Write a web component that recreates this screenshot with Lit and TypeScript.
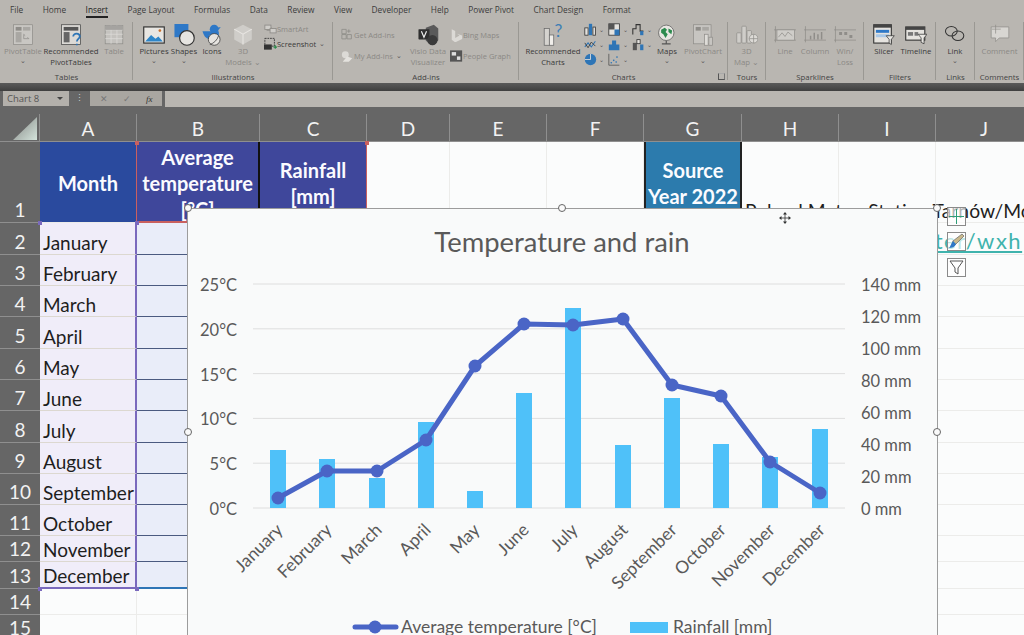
import { LitElement, html, css, svg, nothing } from "lit";
import { customElement } from "lit/decorators.js";

const G = "#8f8d89"; // disabled grey
const B = "#2e75b6";
const I: Record<string, any> = {
  pivot: svg`<rect x="2" y="1" width="26" height="27" fill="#c9c7c3" stroke="${G}"/><rect x="5" y="4" width="8" height="5" fill="${G}"/><rect x="15" y="4" width="10" height="5" fill="#a9a7a3"/><rect x="5" y="11" width="8" height="14" fill="#a9a7a3"/><path d="M16 20h7M23 20l-2-2M16 20v-6l2 2" fill="none" stroke="${G}"/>`,
  rec: svg`<rect x="2" y="1" width="26" height="27" fill="#dcdad6" stroke="#444"/><rect x="5" y="4" width="20" height="5" fill="#555"/><rect x="5" y="11" width="8" height="14" fill="#666"/><path d="M18 17c0-5 9-5 9 0 0 3-4 3-4 7M23 27v2" fill="none" stroke="${B}" stroke-width="2.4"/>`,
  table: svg`<rect x="3" y="2" width="24" height="25" fill="#c4c2be" stroke="${G}"/><path d="M3 8h24M3 14h24M3 20h24M11 2v25M19 2v25" stroke="#dedcd8"/><rect x="3" y="2" width="24" height="6" fill="#a5a3a0"/>`,
  pictures: svg`<rect x="1" y="4" width="28" height="22" fill="#e8e6e2" stroke="#333" stroke-width="1.6"/><path d="M3 24l8-9 6 5 4-3 6 7z" fill="#2e86c9"/><circle cx="23" cy="9" r="1.8" fill="#c9702c"/>`,
  shapes: svg`<rect x="2" y="0" width="19" height="18" fill="#2e78c7"/><circle cx="19" cy="19" r="10" fill="#e6e4e0" stroke="#333" stroke-width="1.6"/>`,
  icons: svg`<circle cx="18" cy="7" r="6" fill="#2e78c7"/><path d="M2 10c2 6 4 10 10 11h8c4-2 5-6 4-11H12z" fill="#2e78c7"/><path d="M22 5l5-1-3 4z" fill="#2e78c7"/><circle cx="18" cy="21" r="8" fill="#e6e4e0" stroke="#333"/><path d="M12 28c6-2 10-6 12-12" stroke="#333" fill="none"/>`,
  cube: svg`<path d="M15 1l12 6v14l-12 7-12-7V7z" fill="#cfcdc9"/><path d="M3 7l12 7 12-7M15 14v14" stroke="#e8e6e2" fill="none" stroke-width="1.4"/>`,
  smart: svg`<rect x="1" y="3" width="7" height="5" fill="#cfcdc9" stroke="${G}"/><path d="M8 6l5 3H3" fill="none" stroke="${G}"/><rect x="7" y="7" width="7" height="5" fill="#cfcdc9" stroke="${G}"/>`,
  shot: svg`<rect x="1" y="1" width="11" height="9" fill="none" stroke="#333" stroke-dasharray="2 1"/><rect x="0" y="8" width="9" height="6" fill="#333"/><path d="M11 11h4M13 9v4" stroke="#2a8a4a" stroke-width="1.4"/>`,
  addin: svg`<path d="M1 1h5v5H1zM7 7h5v5H7zM1 7h5v5H1z" fill="none" stroke="${G}"/><path d="M9 1v4M7 3h4" stroke="${G}"/>`,
  myadd: svg`<circle cx="5" cy="6" r="4" fill="#dcdad6"/><path d="M7 8l6 2-4 4H2z" fill="#e4e2de"/>`,
  visio: svg`<path d="M12 5l11-4 6 5v16l-8 7-9-6z" fill="#5a5a5a"/><rect x="2" y="7" width="15" height="14" rx="1" fill="#2f2f2f"/><path d="M6 10l3.5 8 3.5-8" stroke="#eee" stroke-width="1.6" fill="none"/><circle cx="21" cy="22" r="7" fill="#3a3a3a"/>`,
  bing: svg`<path d="M2 1l4 2v8l5-3-3-2 6 2v4l-8 4-4-3z" fill="#dcdad6"/>`,
  people: svg`<rect x="0" y="1" width="14" height="13" fill="#555"/><rect x="2" y="3" width="5" height="4" fill="#ddd"/><rect x="8" y="8" width="4" height="4" fill="#ddd"/>`,
  recChart: svg`<rect x="3" y="6" width="7" height="23" fill="#d5d3cf" stroke="#666"/><rect x="10" y="15" width="6" height="14" fill="#f0eeea" stroke="#666"/><text x="17" y="18" font-size="24" fill="#3f7fb5" font-family="Lato, sans-serif">?</text>`,
  maps: svg`<circle cx="14" cy="12" r="10.5" fill="#e8e6e2" stroke="#555"/><path d="M7 8l5-3 3 3-2 3 3 3-3 5-3-5-3-2zM17 6l5 3-1 5-4-3z" fill="#2c8a4e"/><path d="M8 27h12M14 23v4" stroke="#555" stroke-width="1.6"/>`,
  pivotChart: svg`<rect x="2" y="1" width="24" height="26" fill="#c7c5c1" stroke="${G}"/><rect x="5" y="4" width="7" height="5" fill="${G}"/><rect x="14" y="4" width="9" height="5" fill="#a9a7a3"/><rect x="17" y="14" width="5" height="15" fill="#dedcd8" stroke="${G}"/><rect x="23" y="18" width="5" height="11" fill="#c7c5c1" stroke="${G}"/>`,
  map3d: svg`<rect x="1" y="12" width="6" height="14" rx="1" fill="#cfcdc9" stroke="${G}"/><rect x="8" y="3" width="6" height="23" rx="1" fill="#cfcdc9" stroke="${G}"/><rect x="15" y="9" width="6" height="17" rx="1" fill="#cfcdc9" stroke="${G}"/><circle cx="24" cy="20" r="6" fill="#dcdad6" stroke="${G}"/><path d="M18 20h12M24 14v12" stroke="${G}"/>`,
  line: svg`<path d="M2 3v22M0 8h30M0 22h30" stroke="${G}"/><rect x="4" y="8" width="24" height="14" fill="#cfcdc9" stroke="${G}"/><path d="M6 18l5-6 4 5 4-6 6 5" fill="none" stroke="${G}"/>`,
  column: svg`<path d="M2 3v22M0 8h30M0 22h30" stroke="${G}"/><path d="M8 21v-5h2v5zM13 21v-9h2v9zM18 21v-7h2v7zM23 21v-10h2v10z" fill="${G}"/>`,
  win: svg`<path d="M2 3v22M0 8h30M0 22h30" stroke="${G}"/><path d="M7 11h4v4H7zM14 11h4v4h-4zM21 15h4v4h-4z" fill="${G}"/>`,
  slicer: svg`<rect x="1" y="1" width="24" height="25" fill="#e5e3df" stroke="#333" stroke-width="1.5"/><rect x="1" y="1" width="24" height="4" fill="#444"/><rect x="4" y="8" width="18" height="4" fill="#2e78c7"/><rect x="4" y="14" width="18" height="4" fill="#a8c8e8"/><path d="M18 16h11l-4 5v7l-3-2v-5z" fill="#e8e6e2" stroke="#333"/>`,
  timeline: svg`<rect x="1" y="4" width="26" height="18" fill="#e5e3df" stroke="#333" stroke-width="1.5"/><rect x="1" y="4" width="26" height="4" fill="#444"/><rect x="4" y="11" width="7" height="5" fill="#777"/><rect x="13" y="11" width="5" height="5" fill="#777"/><path d="M18 14h12l-4 5v8l-4-2v-6z" fill="#e8e6e2" stroke="#333"/>`,
  link: svg`<ellipse cx="10" cy="10" rx="8" ry="6.5" fill="none" stroke="#333" stroke-width="1.4"/><ellipse cx="19" cy="16" rx="8" ry="6.5" fill="none" stroke="#333" stroke-width="1.4"/>`,
  comment: svg`<path d="M3 4h24v15H14l-5 5v-5H3z" fill="#d8d6d2" stroke="${G}"/><path d="M9 1v12M4 7h12" stroke="${G}"/>`,
};

type Big = { k: "big"; w: number; icon: string; l: string[]; d?: boolean; chev?: boolean };
type Small = { icon?: string; l: string; d?: boolean; chev?: boolean };
type Col = { k: "col"; w: number; tight?: boolean; rows: Small[] };
type Gal = { k: "gal"; w: number };
type Item = Big | Col | Gal;
const big = (w: number, icon: string, l: string[], d = false, chev = false): Big => ({ k: "big", w, icon, l, d, chev });

const groups: { t: string; w: number; pad: number; launcher?: boolean; items: Item[] }[] = [
  { t: "Tables", w: 133, pad: 0, items: [big(46, "pivot", ["PivotTable"], true, true), big(50, "rec", ["Recommended", "PivotTables"]), big(36, "table", ["Table"], true)] },
  { t: "Illustrations", w: 200, pad: 6, items: [big(30, "pictures", ["Pictures"], false, true), big(30, "shapes", ["Shapes"], false, true), big(26, "icons", ["Icons"]), big(36, "cube", ["3D", "Models ⌄"], true),
    { k: "col", w: 70, tight: true, rows: [{ icon: "smart", l: "SmartArt", d: true }, { icon: "shot", l: "Screenshot", chev: true }] }] },
  { t: "Add-ins", w: 186, pad: 5, items: [{ k: "col", w: 71, rows: [{ icon: "addin", l: "Get Add-ins", d: true }, { icon: "myadd", l: "My Add-ins", d: true, chev: true }] }, big(38, "visio", ["Visio Data", "Visualizer"], true),
    { k: "col", w: 70, rows: [{ icon: "bing", l: "Bing Maps", d: true }, { icon: "people", l: "People Graph", d: true }] }] },
  { t: "Charts", w: 209, pad: 6, launcher: true, items: [big(56, "recChart", ["Recommended", "Charts"]), { k: "gal", w: 71 }, big(30, "maps", ["Maps"], false, true), big(42, "pivotChart", ["PivotChart"], true, true)] },
  { t: "Tours", w: 38, pad: 0, items: [big(37, "map3d", ["3D", "Map ⌄"], true)] },
  { t: "Sparklines", w: 98, pad: 4, items: [big(30, "line", ["Line"], true), big(30, "column", ["Column"], true), big(30, "win", ["Win/", "Loss"], true)] },
  { t: "Filters", w: 72, pad: 4, items: [big(32, "slicer", ["Slicer"]), big(32, "timeline", ["Timeline"])] },
  { t: "Links", w: 39, pad: 0, items: [big(38, "link", ["Link"], false, true)] },
  { t: "Comments", w: 49, pad: 0, items: [big(49, "comment", ["Comment"], true)] },
];

const tabs = ["File", "Home", "Insert", "Page Layout", "Formulas", "Data", "Review", "View", "Developer", "Help", "Power Pivot", "Chart Design", "Format"];

const gallery = [
  svg`<rect x="1" y="6" width="4" height="9" fill="#e5e3df" stroke="#333"/><rect x="6" y="1" width="4" height="14" fill="${B}"/><rect x="11" y="5" width="3" height="10" fill="#e5e3df" stroke="#333"/>`,
  svg`<rect x="1" y="1" width="13" height="14" fill="#e5e3df" stroke="#333"/><rect x="8" y="8" width="6" height="7" fill="${B}"/><rect x="1" y="1" width="7" height="7" fill="#555"/>`,
  svg`<path d="M1 14V7h4V2h5v8h4" fill="none" stroke="#333" stroke-width="1.3"/><path d="M10 15v-5h4v5z" fill="${B}"/>`,
  svg`<path d="M1 11l4-5 4 5 5-7" fill="none" stroke="${B}" stroke-width="1.3"/><path d="M1 6l4 6 4-7 5 5" fill="none" stroke="#333"/>`,
  svg`<path d="M1 15V8h4V3h5v5h4v7z" fill="${B}"/>`,
  svg`<rect x="1" y="6" width="5" height="9" fill="#555"/><rect x="6" y="2" width="4" height="5" fill="#e5e3df" stroke="#333"/><rect x="10" y="8" width="4" height="7" fill="${B}"/>`,
  svg`<circle cx="8" cy="8" r="7" fill="${B}"/><path d="M8 8V1M8 8H1" stroke="#e5e3df"/>`,
  svg`<path d="M1 1v14h13" fill="none" stroke="#555"/><path d="M4 12h.1M7 9h.1M10 11h.1M11 5h.1" stroke="${B}" stroke-width="2" stroke-linecap="round"/>`,
];

const colW = [40, 97, 123, 107, 83, 97, 97, 98, 97, 97, 97];
const rowH = [28, 81, 32, 31, 31, 32, 31, 31, 32, 31, 31, 31, 26, 27, 26, 26];
const colN = ["", "A", "B", "C", "D", "E", "F", "G", "H", "I", "J"];
const months = ["January", "February", "March", "April", "May", "June", "July", "August", "September", "October", "November", "December"];

const bars = [450, 459, 478, 422, 491, 393, 308, 445, 398, 444, 457, 429];
const lineY = [498, 471, 471, 440, 366, 324, 325, 319, 385, 396, 462, 493];
const xs = [278, 327, 377, 426, 475, 524, 573, 623, 672, 721, 770, 820];

// selection corner grips, in sheet coordinates
const grips: [number, number, string][] = [
  [135, 27, "#c9605f"], [365, 27, "#c9605f"],
  [38, 107, "#7a69bd"], [135, 107, "#7a69bd"], [38, 473, "#7a69bd"], [135, 473, "#7a69bd"],
];

@customElement("excel-ribbon")
class ExcelRibbon extends LitElement {
  static styles = css`
    :host { display: block; background: #b9b6b1; font-family: "Open Sans", sans-serif; color: #333; }
    .tabs { display: flex; gap: 19.5px; height: 22px; padding: 3px 0 0 10px; box-sizing: border-box; font-size: 8.3px; line-height: 14px; }
    .tab { position: relative; color: #3c3c3c; white-space: nowrap; }
    .tab.on { color: #222; }
    .tab.on::after { content: ""; position: absolute; left: 0; right: 0; top: 13px; height: 1.5px; background: #222; }
    .body { display: flex; height: 61px; }
    .group { box-sizing: border-box; display: flex; flex-direction: column; height: 61px; position: relative; flex: none; }
    .group::after { content: ""; position: absolute; right: 0; top: 0; width: 1px; height: 58px; background: #9a9893; }
    .items { display: flex; flex: 1; min-height: 0; }
    .gt { text-align: center; font-size: 7.8px; line-height: 12px; height: 12px; color: #444; white-space: nowrap; }
    .launch { position: absolute; right: 3px; bottom: 3px; width: 5px; height: 5px; border: 1px solid #555; border-top-color: #aaa; border-right-color: #777; }
    .big { display: flex; flex-direction: column; align-items: center; flex: none; font-size: 7.8px; line-height: 10.5px; white-space: nowrap; }
    .big svg { width: 22px; height: 22px; display: block; margin-top: 2px; }
    .big .lb { text-align: center; color: #3a3a3a; }
    .d, .big .lb.d { color: #8b8985; }
    .chev { font-size: 7px; line-height: 8px; color: #555; }
    .col { display: flex; flex-direction: column; flex: none; gap: 7px; padding: 6px 0 0 3px; box-sizing: border-box; font-size: 7.5px; line-height: 14px; white-space: nowrap; }
    .col.tight { padding-top: 0; gap: 1px; }
    .sm { display: flex; align-items: center; color: #3a3a3a; }
    .sm.d { color: #8b8985; }
    .sm svg { width: 13px; height: 14px; flex: none; }
    .sm .chev { margin-left: 3px; }
    .gal { display: grid; grid-template-columns: repeat(3, 24px); grid-auto-rows: 15px; flex: none; padding-left: 3px; box-sizing: border-box; }
    .gi { display: flex; align-items: center; gap: 2px; font-size: 6px; color: #555; }
    .gi svg { width: 13px; height: 13px; }
    .sep { height: 8px; background: linear-gradient(#5a5a5a, #3f3f3f); }
  `;
  renderItem(it: Item) {
    if (it.k === "big") {
      return html`<div class="big" style="width:${it.w}px">
        <svg viewBox="0 0 30 30">${I[it.icon]}</svg>
        <div class="lb ${it.d ? "d" : ""}">${it.l.map((t) => html`<div>${t}</div>`)}</div>
        ${it.chev ? html`<div class="chev">⌄</div>` : nothing}
      </div>`;
    }
    if (it.k === "col") {
      return html`<div class="col ${it.tight ? "tight" : ""}" style="width:${it.w}px">
        ${it.rows.map((r) => html`<div class="sm ${r.d ? "d" : ""}"><svg viewBox="0 0 15 15">${r.icon ? I[r.icon] : nothing}</svg><span>${r.l}</span>${r.chev ? html`<span class="chev">⌄</span>` : nothing}</div>`)}
      </div>`;
    }
    return html`<div class="gal" style="width:${it.w}px">
      ${gallery.map((g) => html`<div class="gi"><svg viewBox="0 0 16 16">${g}</svg>⌄</div>`)}
    </div>`;
  }
  render() {
    return html`
      <div class="tabs">${tabs.map((t) => html`<div class="tab ${t === "Insert" ? "on" : ""}">${t}</div>`)}</div>
      <div class="body">
        ${groups.map((g) => html`<div class="group" style="width:${g.w}px">
          <div class="items" style="padding-left:${g.pad}px">${g.items.map((i) => this.renderItem(i))}</div>
          <div class="gt">${g.t}</div>
          ${g.launcher ? html`<div class="launch"></div>` : nothing}
        </div>`)}
      </div>
      <div class="sep"></div>`;
  }
}

@customElement("formula-bar")
class FormulaBar extends LitElement {
  static styles = css`
    :host { display: flex; align-items: flex-start; height: 23px; background: #666; font-family: "Open Sans", sans-serif; padding-left: 3px; box-sizing: border-box; }
    .name { width: 66px; height: 15px; background: #b3b0ab; display: flex; align-items: center; justify-content: space-between; padding: 0 6px 0 4px; box-sizing: border-box; font-size: 9.5px; color: #555; }
    .name i { width: 0; height: 0; border: 3px solid transparent; border-top: 3.5px solid #444; margin-top: 3px; }
    .dots { width: 21px; text-align: center; color: #ccc; font-size: 9px; line-height: 14px; }
    .btns { width: 72px; height: 15px; background: #a9a6a1; display: flex; align-items: center; justify-content: space-around; font-size: 9px; color: #777; font-family: "Liberation Serif", serif; padding: 0 2px; box-sizing: border-box; }
    .btns b { font-style: italic; color: #333; font-weight: normal; }
    .input { flex: 1; height: 16px; background: #b9b6b1; margin-left: 3px; }
  `;
  render() {
    return html`<div class="name">Chart 8<i></i></div><div class="dots">⋮</div>
      <div class="btns"><span>✕</span><span>✓</span><b>fx</b></div><div class="input"></div>`;
  }
}

@customElement("chart-overlay")
class ChartOverlay extends LitElement {
  static styles = css`
    :host { display: block; position: absolute; left: 187px; top: 94px; width: 750px; height: 440px; }
    svg.c { display: block; position: absolute; left: 0; top: 0; overflow: visible; }
    text { font-family: Lato, sans-serif; fill: #595959; }
    .t { font-size: 27.4px; text-anchor: middle; }
    .a { font-size: 16.5px; }
    .l { font-size: 17.5px; }
  `;
  render() {
    const left = [25, 20, 15, 10, 5, 0];
    const right = [140, 120, 100, 80, 60, 40, 20, 0];
    const pts = xs.map((x, i) => `${x},${lineY[i]}`).join(" ");
    return html`<svg class="c" width="750" height="440" viewBox="187 208 750 440">
      <rect x="187.5" y="208.5" width="750" height="440" fill="#f9fafa" stroke="#9c9c9c"/>
      <text class="t" x="562" y="251.5">Temperature and rain</text>
      ${left.map((_, i) => svg`<line x1="253" x2="845" y1="${284 + i * 44.8}" y2="${284 + i * 44.8}" stroke="#dedede"/>`)}
      ${left.map((v, i) => svg`<text class="a" x="237" y="${291 + i * 44.8}" text-anchor="end">${v}°C</text>`)}
      ${right.map((v, i) => svg`<text class="a" x="861" y="${291 + i * 32}">${v} mm</text>`)}
      ${bars.map((y, i) => svg`<rect x="${xs[i] - 8}" y="${y}" width="16" height="${508 - y}" fill="#4fc1f9"/>`)}
      <polyline points="${pts}" fill="none" stroke="#4a65c6" stroke-width="5" stroke-linejoin="round"/>
      ${xs.map((x, i) => svg`<circle cx="${x}" cy="${lineY[i]}" r="6.5" fill="#4a65c6"/>`)}
      ${months.map((m, i) => svg`<text class="l" text-anchor="end" transform="translate(${xs[i] + 6} 531) rotate(-45)">${m}</text>`)}
      <line x1="355" x2="396" y1="627" y2="627" stroke="#4a65c6" stroke-width="5" stroke-linecap="round"/>
      <circle cx="375" cy="627" r="6.5" fill="#4a65c6"/>
      <text class="l" x="401" y="633">Average temperature [°C]</text>
      <rect x="630" y="622" width="38" height="11" fill="#4fc1f9"/>
      <text class="l" x="673" y="633">Rainfall [mm]</text>
      ${[[188, 208], [562, 208], [937, 208], [188, 432], [937, 432]].map(([x, y]) => svg`<circle cx="${x}" cy="${y}" r="3.5" fill="#fafafa" stroke="#666"/>`)}
      <g stroke="#333" fill="#333" transform="translate(785 218)">
        <path d="M-5 0H5M0 -5V5" stroke-width=".8"/>
        <path d="M0 -6l-2 2.5h4zM0 6l-2-2.5h4zM-6 0l2.5-2v4zM6 0l-2.5-2v4z" stroke="none"/>
      </g>
      <g fill="#ffffffaa" stroke="#8a8a8a">
        <rect x="947.5" y="207.5" width="18" height="18"/>
        <rect x="947.5" y="232.5" width="18" height="18"/>
        <rect x="947.5" y="258.5" width="18" height="18"/>
      </g>
      <path d="M956.5 209v15M949 216.5h15" stroke="#2f9e78"/>
      <path d="M962 234l2 2-9 9-3-1 1-3z" fill="#c9b98c" stroke="#666" stroke-width=".7"/>
      <path d="M953 241l3 3c-1 3-4 4-7 4 1-1 2-4 4-7z" fill="#2e78c7"/>
      <path d="M950 261h13l-5 7v6l-3-2v-4z" fill="none" stroke="#555"/>
    </svg>`;
  }
}

@customElement("app-root")
export class AppRoot extends LitElement {
  static styles = css`
    :host { display: block; width: 1024px; height: 635px; overflow: hidden; background: #666; font-family: Lato, sans-serif; }
    .sheet { position: relative; display: grid; height: 521px; overflow: hidden; background: #fbfcfc; color: #1e1e1e; font-size: 19.3px; }
    .ch { background: #666; color: #f2f2f2; display: flex; justify-content: center; align-items: center; padding-top: 2px; font-size: 19px; border-right: 1px solid #8f8f8f; border-bottom: 1px solid #8f8f8f; box-sizing: border-box; position: relative; }
    .rh { background: #666; color: #f2f2f2; display: flex; justify-content: center; align-items: flex-end; font-size: 19px; line-height: 24px; border-bottom: 1px solid #8f8f8f; box-sizing: border-box; }
    .corner { border-right: 1px solid #8f8f8f; }
    .tri { position: absolute; left: 13px; top: 3px; width: 24px; height: 23px; background: linear-gradient(135deg, #9aa09c 30%, #d4e4dc); clip-path: polygon(100% 0, 100% 100%, 0 100%); }
    .cell { box-sizing: border-box; border-right: 1px solid #ececea; border-bottom: 1px solid #ececea; white-space: nowrap; display: flex; align-items: flex-end; line-height: 22px; padding: 0 3px; min-width: 0; }
    .hd { background: #3f479b; color: #fbfbff; font-size: 20px; font-weight: 700; text-align: center; justify-content: center; align-items: center; line-height: 26px; overflow: hidden; white-space: normal; padding: 2px 0 0; }
    .hd.a { background: #2a4a9e; border-right: 1px solid #c9605f; }
    .hd.b { border-right: 2px solid #111; border-bottom: 2px solid #c9605f; }
    .hd.c { border-right: 1px solid #c9605f; }
    .hd.g { background: #2c7bad; border-left: 2px solid #222; border-right: 2px solid #222; }
    .ma { background: #f0edf9; border-right: 2px solid #7a69bd; border-bottom: 1px solid #dcd8d0; font-size: 19px; }
    .ma.last { border-bottom: 2px solid #7a69bd; }
    .mb { background: #e9edf9; border-bottom: 1px solid #4a5a80; border-right: 0; }
    .mb.last { border-bottom: 2px solid #2e75b6; }
    .link { color: #3fb3ad; text-decoration: underline; font-size: 22px; letter-spacing: 1.5px; padding-bottom: 2px; }
    .ov { overflow: visible; }
    .grip { position: absolute; width: 4px; height: 4px; }
  `;
  cell(r: number, c: number) {
    if (r === 1) {
      if (c === 1) return html`<div class="cell hd a">Month</div>`;
      if (c === 2) return html`<div class="cell hd b"><span>Average temperature [°C]</span></div>`;
      if (c === 3) return html`<div class="cell hd c"><span>Rainfall [mm]</span></div>`;
      if (c === 7) return html`<div class="cell hd g"><span>Source Year 2022</span></div>`;
      if (c === 8) return html`<div class="cell ov">Poland Meteo Station Tarnów/Mościce</div>`;
    }
    if (r === 2 && c === 8) return html`<div class="cell ov"><span class="link">https://www.ogi/ter/wxh</span></div>`;
    if (r >= 2 && r <= 13) {
      if (c === 1) return html`<div class="cell ma ${r === 13 ? "last" : ""}">${months[r - 2]}</div>`;
      if (c === 2) return html`<div class="cell mb ${r === 13 ? "last" : ""}"></div>`;
    }
    return html`<div class="cell"></div>`;
  }
  render() {
    const gridStyle = `grid-template-columns:${colW.map((w) => w + "px").join(" ")};grid-template-rows:${rowH.map((h) => h + "px").join(" ")}`;
    return html`
      <excel-ribbon></excel-ribbon>
      <formula-bar></formula-bar>
      <div class="sheet" style="${gridStyle}">
        ${colN.map((n, i) => html`<div class="ch ${i === 0 ? "corner" : ""}">${i === 0 ? html`<div class="tri"></div>` : n}</div>`)}
        ${rowH.slice(1).map((_, ri) => html`
          <div class="rh">${ri + 1}</div>
          ${colW.slice(1).map((_w, ci) => this.cell(ri + 1, ci + 1))}
        `)}
        ${grips.map(([x, y, col]) => html`<div class="grip" style="left:${x}px;top:${y}px;background:${col}"></div>`)}
        <chart-overlay></chart-overlay>
      </div>`;
  }
}

void ExcelRibbon; void FormulaBar; void ChartOverlay;
